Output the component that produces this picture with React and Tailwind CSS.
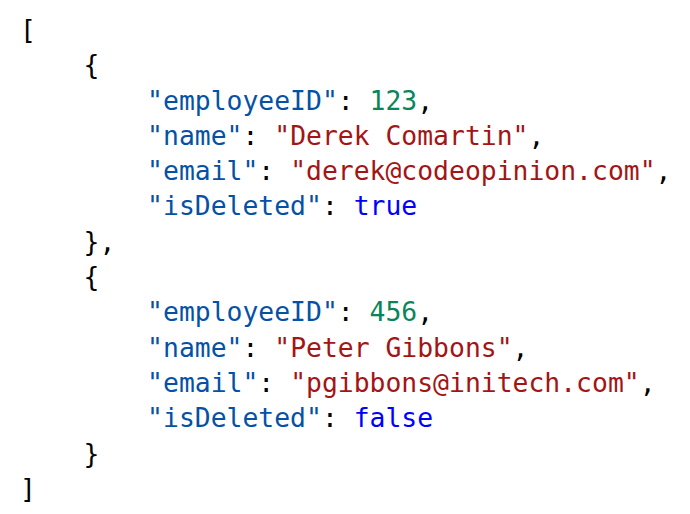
import React from 'react';

// token colours, VS Code light theme
const K = ({ children }) => <span className="text-[#0451a5]">{children}</span>;
const S = ({ children }) => <span className="text-[#a31515]">{children}</span>;
const N = ({ children }) => <span className="text-[#098658]">{children}</span>;
const B = ({ children }) => <span className="text-[#0000ff]">{children}</span>;

const employees = [
  { id: '123', name: 'Derek Comartin', email: 'derek@codeopinion.com', deleted: 'true' },
  { id: '456', name: 'Peter Gibbons', email: 'pgibbons@initech.com', deleted: 'false' },
];

export default function App() {
  return (
    <div className="w-[690px] h-[514px] bg-white overflow-hidden">
      <pre className="pl-[20px] pt-[12px] text-[26.4px] leading-[35.3px] text-black font-['DejaVu_Sans_Mono',monospace] whitespace-pre">
        {'[\n'}
        {employees.map((e, i) => (
          <React.Fragment key={e.id}>
            {'    {\n'}
            {'        '}<K>"employeeID"</K>: <N>{e.id}</N>{',\n'}
            {'        '}<K>"name"</K>: <S>"{e.name}"</S>{',\n'}
            {'        '}<K>"email"</K>: <S>"{e.email}"</S>{',\n'}
            {'        '}<K>"isDeleted"</K>: <B>{e.deleted}</B>{'\n'}
            {i < employees.length - 1 ? '    },\n' : '    }\n'}
          </React.Fragment>
        ))}
        {']'}
      </pre>
    </div>
  );
}
